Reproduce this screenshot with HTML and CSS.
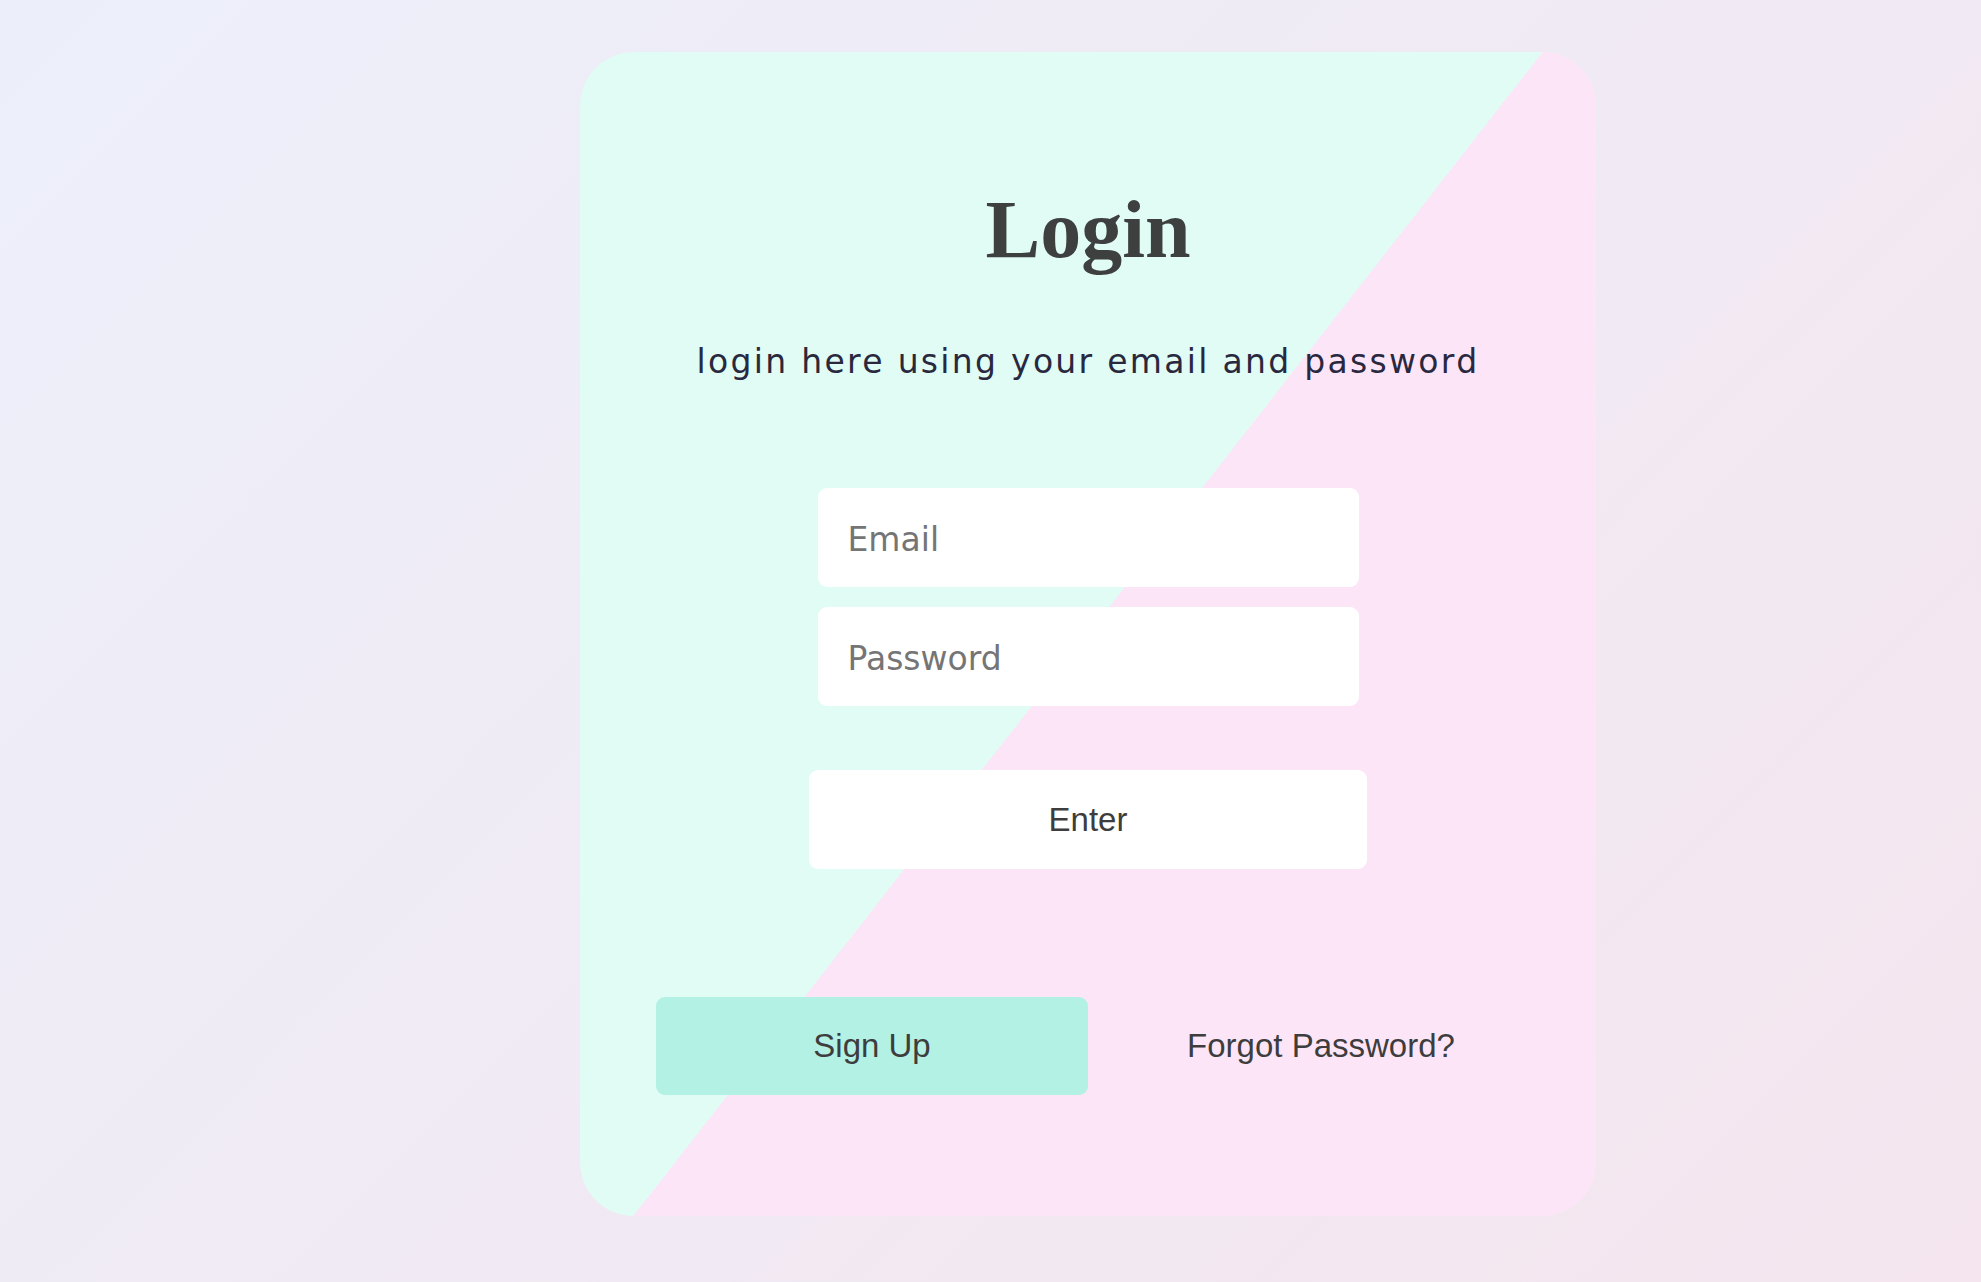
FILE: index.html
```html
<!DOCTYPE html>
<html lang="en">
<head>
  <meta charset="UTF-8">
  <meta name="viewport" content="width=device-width, initial-scale=1.0">
  <title>Login</title>
  <link rel="stylesheet" href="styles.css">
</head>
<body>

  <div class="login-card">
    <h1 class="title">Login</h1>
    <p class="subtitle">login here using your email and password</p>

    <form class="login-form" onsubmit="return false">
      <input type="email" class="field" placeholder="Email">
      <input type="password" class="field" placeholder="Password">
      <button type="submit" class="enter-button">Enter</button>
    </form>

    <div class="bottom-row">
      <button class="signup-button">Sign Up</button>
      <button class="forgot-button">Forgot Password?</button>
    </div>
  </div>

</body>
</html>
```

FILE: styles.css
```css
body {
  margin: 0;
  padding: 0;
  min-height: 100vh;
  background: linear-gradient(135deg, #eceffa, #f4e5ee);
  font-family: 'Liberation Sans', Arial, sans-serif;
}

.login-card {
  width: 1016px;
  height: 1164px;
  margin: 52px 0 0 580px;
  box-sizing: border-box;
  padding-top: 137px;
  border-radius: 54px;
  background: linear-gradient(128deg, #e0fcf4 50%, #fde5f8 50%);
  display: flex;
  flex-direction: column;
  align-items: center;
}

.title {
  margin: 0;
  font-family: 'Liberation Serif', 'Times New Roman', serif;
  font-size: 82px;
  font-weight: bold;
  line-height: 1;
  color: #3d403f;
}

.subtitle {
  margin: 74px 0 0;
  font-family: 'DejaVu Sans', sans-serif;
  font-size: 33px;
  line-height: 1;
  letter-spacing: 2.3px;
  color: #29283f;
}

.login-form {
  margin-top: 110px;
  display: flex;
  flex-direction: column;
  align-items: center;
}

.field {
  width: 541px;
  height: 99px;
  box-sizing: border-box;
  padding: 4px 30px 0;
  margin-bottom: 20px;
  border: none;
  border-radius: 9px;
  background-color: #fff;
  font-family: 'DejaVu Sans', sans-serif;
  font-size: 33px;
  color: #333;
  outline: none;
}

.field::placeholder {
  color: #757575;
}

.enter-button {
  width: 558px;
  height: 99px;
  margin-top: 44px;
  border: none;
  border-radius: 9px;
  background-color: #fff;
  font-family: 'Liberation Sans', Arial, sans-serif;
  font-size: 33px;
  color: #3d3d3d;
  cursor: pointer;
}

.bottom-row {
  align-self: flex-start;
  margin: 128px 0 0 76px;
  display: grid;
  grid-template-columns: 432px 432px;
  gap: 17px;
}

.signup-button,
.forgot-button {
  height: 98px;
  border: none;
  border-radius: 9px;
  font-family: 'Liberation Sans', Arial, sans-serif;
  font-size: 33px;
  color: #3d3d3d;
  cursor: pointer;
}

.signup-button {
  background-color: #b3f1e4;
}

.forgot-button {
  background: transparent;
}
```
